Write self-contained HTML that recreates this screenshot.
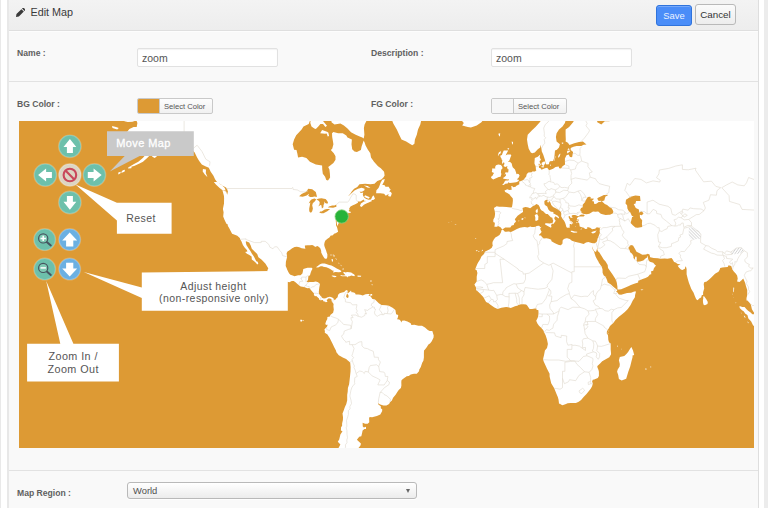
<!DOCTYPE html>
<html lang="en">
<head>
<meta charset="utf-8">
<title>Edit Map</title>
<style>
*{box-sizing:border-box;margin:0;padding:0}
html,body{width:768px;height:508px;overflow:hidden}
body{background:#fff;font-family:"Liberation Sans",sans-serif;color:#444;position:relative}
.lstrip{position:absolute;left:0;top:0;width:1.4px;height:508px;background:#e9e9e9}
.rstrip{position:absolute;left:764px;top:0;width:4px;height:508px;background:#ececec}
.panel{position:absolute;left:7px;top:-1px;width:752px;height:520px;background:#f9f9f9;border:1px solid #dedede;border-left:2px solid #e8e8e8}
.hdr{position:absolute;left:0;top:0;width:100%;height:31px;background:linear-gradient(#f3f3f3,#ededed);border-bottom:1px solid #dfdfdf;box-shadow:0 1px 0 #fdfdfd}
.hdr h3{position:absolute;left:21.5px;top:6px;font-size:10.8px;line-height:13px;font-weight:normal;color:#3a3a3a;letter-spacing:0}
.pencil{position:absolute;left:7px;top:8px;width:9px;height:9px}
.btn{position:absolute;top:5px;height:21px;border-radius:3px;font-size:9.8px;line-height:19px;text-align:center}
.save{left:647px;width:36px;background:#4a8df8;border:1px solid #2f73dc;color:#eaf2ff;font-size:9.4px;box-shadow:inset 0 1px 0 rgba(255,255,255,.25)}
.cancel{left:686px;width:41px;top:4px;background:linear-gradient(#fbfbfb,#ededed);border:1px solid #b9b9b9;color:#333}
.lbl{position:absolute;font-size:8.6px;font-weight:bold;color:#606060;letter-spacing:0;white-space:nowrap}
.inp{position:absolute;height:19px;width:141px;background:#fff;border:1px solid #e1e1e1;border-radius:2px;box-shadow:inset 0 1px 1px rgba(0,0,0,.05);font-size:10.5px;color:#555;line-height:18px;padding-left:4px}
.hr{position:absolute;left:0;width:100%;height:1px;background:#e2e2e2}
.cp{position:absolute;top:98px;width:76px;height:16px;border:1px solid #c9c9c9;border-radius:2px;background:linear-gradient(#fdfdfd,#f1f1f1);overflow:hidden}
.cp i{position:absolute;left:0;top:0;width:22px;height:100%;border-right:1px solid #c9c9c9}
.cp span{position:absolute;left:26px;top:0;font-size:7.6px;line-height:15px;color:#555;white-space:nowrap}
.sel{position:absolute;left:118px;top:481.6px;width:290px;height:17.4px;border:1px solid #b9b9b9;border-radius:3px;background:linear-gradient(#fff,#ececec);font-size:9.4px;line-height:15.4px;color:#505050;padding-left:5px;box-shadow:0 1px 0 rgba(255,255,255,.8)}
.sel b{position:absolute;right:6px;top:6px;width:0;height:0;border-left:2.5px solid transparent;border-right:2.5px solid transparent;border-top:4px solid #666}
#map{position:absolute;left:10px;top:121px;width:735px;height:327px;background:#dd9a34;overflow:hidden}
#map svg{position:absolute;left:0;top:0}
.tip{font-family:"Liberation Sans",sans-serif;font-size:10.5px;fill:#555;text-anchor:middle;letter-spacing:.42px}
</style>
</head>
<body>
<div class="lstrip"></div><div class="rstrip"></div>
<div class="panel">
  <div class="hdr">
    <svg class="pencil" viewBox="0 0 10 10"><path d="M0 10 L0.5 6.8 L6 1.3 L8.7 4 L3.2 9.5 Z M6.7 0.6 L7.4 -0.1 Q8.1 -0.5 8.8 0.1 L9.9 1.2 Q10.5 1.9 10.1 2.6 L9.4 3.3 Z" fill="#3a3a3a"/></svg>
    <h3>Edit Map</h3>
    <div class="btn save">Save</div>
    <div class="btn cancel">Cancel</div>
  </div>
  <div class="lbl" style="left:8px;top:48px">Name :</div>
  <div class="inp" style="left:128px;top:47.5px">zoom</div>
  <div class="lbl" style="left:362px;top:48px">Description :</div>
  <div class="inp" style="left:482px;top:47.5px">zoom</div>
  <div class="hr" style="top:81px"></div>
  <div class="lbl" style="left:8px;top:98.7px">BG Color :</div>
  <div class="cp" style="left:128px"><i style="background:#dd9a34"></i><span>Select Color</span></div>
  <div class="lbl" style="left:362px;top:98.7px">FG Color :</div>
  <div class="cp" style="left:482px"><i style="background:#f7f7f7"></i><span>Select Color</span></div>
  <div id="map">
<svg width="735" height="327" viewBox="0 0 735 327">
<path fill="#fff" d="M101.7 -32.3L105.2 -21.3L111.1 -16.3L112.3 -11.0L116.3 -9.2L111.6 -8.1L105.7 -6.4L101.5 -5.3L105.5 0.2L108.8 1.1L113.4 0.8L117.4 -0.6L118.4 1.9L117.7 6.1L114.6 6.1L110.4 8.1L107.8 11.2L106.2 15.6L108.0 20.4L111.1 23.7L115.1 22.8L115.8 26.9L116.3 29.6L119.8 28.2L123.3 28.7L127.1 28.7L126.4 34.0L123.8 37.0L119.3 40.7L114.6 43.2L109.2 46.4L115.1 45.0L120.0 42.8L124.0 40.7L128.7 36.5L132.2 33.1L134.6 30.0L136.2 26.0L138.6 20.9L141.6 17.6L144.5 17.1L142.1 19.9L139.8 25.1L139.5 26.9L144.0 25.5L147.5 23.2L148.7 19.5L152.2 18.5L154.6 21.4L158.1 23.2L164.0 23.2L168.2 25.1L172.2 27.8L175.7 31.4L176.9 34.0L178.1 36.5L180.2 39.9L182.8 43.6L186.3 45.2L189.8 46.8L191.7 50.8L194.3 54.6L196.2 58.4L197.6 60.6L202.3 63.9L207.0 66.4L207.9 67.5L208.9 70.6L208.2 73.7L207.2 70.6L203.5 69.6L204.9 74.7L205.1 77.1L205.0 82.4L203.9 88.1L204.6 91.3L204.2 95.6L205.6 98.9L207.4 102.7L208.6 103.3L208.9 105.1L210.0 106.8L211.4 109.4L213.1 112.7L216.4 113.9L218.3 114.8L220.8 117.0L221.3 118.4L222.5 120.5L223.9 124.1L225.8 126.7L227.9 129.1L228.4 130.4L226.1 131.0L227.9 132.8L230.0 133.8L232.6 135.6L232.8 138.5L235.2 140.2L237.1 142.0L238.1 143.6L239.3 142.8L238.7 140.8L237.3 140.2L236.4 138.5L234.9 135.6L232.8 132.5L231.4 129.9L229.8 127.8L227.4 124.1L226.7 120.8L227.2 120.3L230.2 121.6L231.7 124.6L232.8 127.8L235.6 130.6L238.2 133.0L239.4 136.2L242.7 138.7L246.5 142.8L248.3 145.8L249.3 147.3L248.3 149.6L249.8 152.0L251.4 153.2L253.3 154.9L256.3 155.8L259.1 157.4L261.7 158.6L265.0 159.8L268.5 160.7L270.4 161.2L272.8 160.1L274.7 160.0L276.5 161.2L279.6 163.9L281.7 165.5L285.0 166.0L288.5 167.2L290.4 167.0L290.9 167.8L293.2 170.5L294.9 172.2L294.9 174.1L296.0 175.2L297.2 174.9L298.6 176.2L300.0 177.6L300.0 178.5L301.7 179.2L303.8 179.0L304.7 180.4L306.1 180.4L306.6 181.3L307.8 181.0L308.5 180.4L307.6 179.0L309.0 178.1L309.7 177.2L311.8 177.8L312.7 178.8L312.5 179.9L313.4 181.3L314.8 180.4L314.8 177.8L313.2 176.4L310.9 175.8L308.7 176.3L306.6 177.2L305.0 177.6L303.3 176.9L302.4 175.7L301.4 174.8L300.0 172.7L299.8 171.0L300.0 168.9L300.3 166.5L301.0 163.0L299.1 161.2L296.8 160.6L294.4 161.0L290.9 161.0L289.2 161.2L287.6 160.7L289.0 159.0L289.2 156.9L289.5 154.7L290.9 154.4L291.6 152.0L292.3 150.0L293.5 147.8L292.8 146.8L288.5 146.8L284.3 148.0L283.8 150.7L283.4 152.5L281.5 154.2L279.1 154.2L275.6 155.2L273.7 154.4L271.4 153.7L270.2 152.5L268.5 149.5L267.6 147.0L266.7 145.0L266.9 140.8L268.1 135.9L267.6 132.3L268.5 130.4L270.9 128.9L273.2 127.3L275.6 125.9L277.9 125.8L280.3 126.3L282.6 127.3L284.5 127.5L286.4 127.8L285.9 125.7L285.9 124.6L288.5 124.2L290.9 124.3L293.2 124.1L295.3 124.9L296.0 125.9L298.4 125.0L300.0 125.9L301.4 127.5L302.2 129.9L302.2 131.5L303.3 133.8L304.3 135.4L305.7 137.4L306.4 137.8L307.6 137.7L308.3 136.2L308.4 133.6L307.6 131.2L307.1 129.4L306.1 127.0L305.4 125.1L305.2 123.3L305.7 121.1L306.4 119.5L308.5 117.8L310.4 116.4L311.8 114.5L313.4 114.5L315.5 112.5L316.7 112.2L319.1 110.7L318.4 107.7L317.9 106.0L317.0 104.2L317.0 101.9L316.7 99.2L317.7 98.6L317.7 101.3L318.1 104.2L318.0 105.2L318.8 103.9L320.0 101.6L320.0 100.4L319.1 98.6L320.5 99.2L320.5 99.9L322.4 97.4L322.6 95.6L322.6 95.0L326.1 94.3L327.5 93.6L326.1 93.4L323.5 93.9L326.6 92.8L328.5 92.5L328.9 91.6L329.6 92.2L330.4 91.9L332.0 91.7L332.0 90.5L331.5 90.5L331.8 91.3L330.8 91.3L330.4 90.0L329.6 89.5L330.6 88.6L330.1 87.8L331.5 85.6L333.9 84.3L336.2 83.3L339.0 81.7L338.8 80.6L341.4 80.4L343.8 79.1L344.7 78.4L345.2 79.7L347.3 80.1L344.9 80.4L341.9 82.4L340.9 84.9L342.6 85.9L344.9 83.7L347.3 82.4L350.8 81.1L353.1 80.1L352.2 79.1L354.3 79.1L356.0 77.7L354.8 74.7L354.1 74.4L353.1 76.1L352.0 78.4L349.6 78.7L347.3 78.1L345.6 77.1L344.2 75.1L343.8 73.7L344.2 71.6L341.9 72.0L340.5 70.8L343.0 70.8L345.4 69.2L345.6 67.8L342.6 66.7L339.0 67.8L335.5 69.6L332.5 72.3L330.1 74.4L329.2 75.1L331.3 72.7L332.7 70.6L335.1 67.8L338.3 66.0L340.5 63.2L346.1 62.8L351.3 63.2L355.5 62.8L358.3 59.9L362.3 58.6L364.4 56.5L365.6 54.6L365.1 50.8L361.8 47.2L359.0 45.2L357.9 44.0L355.0 40.7L352.0 36.5L351.3 32.2L348.9 28.7L346.6 24.6L345.6 21.4L344.7 19.5L344.0 21.4L342.6 25.5L341.9 29.1L337.9 30.9L335.5 30.5L333.2 28.2L332.5 23.2L332.9 18.5L328.5 16.6L327.3 14.6L323.8 12.2L319.1 12.2L314.4 10.9L313.0 12.2L313.2 16.1L313.9 19.9L314.4 23.2L313.2 27.8L311.8 29.1L314.8 32.2L316.5 35.3L316.5 38.7L314.4 42.0L310.9 44.8L309.2 46.0L310.4 48.4L310.9 52.7L311.1 56.5L309.7 58.4L309.0 59.5L307.3 59.1L306.1 55.8L303.8 52.7L303.3 48.8L303.1 44.4L296.8 43.6L290.9 40.7L287.4 37.0L283.1 35.7L279.1 36.5L278.4 32.7L277.5 28.9L275.1 28.7L273.7 23.2L275.1 18.5L277.2 14.2L279.1 12.2L282.6 8.6L284.5 5.6L289.7 2.9L292.0 -3.0L294.4 -7.5L294.4 -32.3ZM314.4 133.3L315.5 134.3L315.3 135.9L314.6 135.6ZM321.7 143.8L322.8 145.0L322.4 145.3L321.4 144.0ZM312.5 137.9L313.7 137.9L314.1 140.2L313.0 140.8ZM344.9 64.4L348.7 65.0L351.5 67.1L348.4 66.6ZM312.0 -13.3L312.5 1.3L315.5 3.5L318.4 2.9L321.4 2.4L324.9 4.5L328.5 7.6L332.0 11.2L336.7 13.7L340.7 15.6L343.3 16.6L344.7 17.6L345.4 13.7L344.9 7.1L345.6 3.5L347.3 0.2L348.4 -4.7L348.4 -13.3ZM301.2 12.2L303.1 8.9L308.0 10.7L309.7 11.7L306.1 12.7ZM296.9 146.3L298.4 145.3L301.0 143.2L303.0 142.5L305.7 142.5L307.3 142.9L310.1 144.0L312.5 144.4L315.3 145.9L317.7 147.5L320.4 148.8L322.4 150.0L321.9 150.9L319.8 151.2L316.7 151.1L313.9 151.4L314.8 149.8L313.2 149.5L312.0 148.6L309.7 147.3L307.4 146.3L305.7 146.0L304.3 145.8L303.3 145.2L301.7 145.3L300.5 145.8L299.1 146.5ZM316.3 136.9L317.7 137.9L317.4 139.0L316.7 137.7ZM281.2 198.8L282.9 198.8L283.1 200.4L281.5 200.4ZM283.6 199.1L284.5 199.1L284.5 199.9L283.6 199.9ZM310.9 133.8L313.4 133.7L313.4 134.3L310.9 134.3ZM370.8 -32.3L371.9 -13.3L370.3 -7.5L374.3 2.4L377.8 8.6L380.2 13.7L382.5 18.5L387.2 20.4L390.8 22.8L393.3 24.2L395.4 22.8L395.9 18.5L397.8 13.7L399.0 8.6L401.3 3.5L402.5 -1.9L407.2 -5.3L411.9 -6.9L418.9 -13.3L426.0 -32.3ZM351.3 159.5L352.7 159.5L352.4 160.7L351.3 160.5ZM183.9 48.0L187.0 48.6L186.8 51.9L188.5 56.3L185.8 53.5L183.7 50.4ZM321.5 154.8L321.7 154.1L324.0 154.4L326.5 154.3L325.4 153.0L324.0 151.5L325.4 150.9L326.8 151.4L328.0 151.1L330.4 151.2L332.2 151.6L333.6 152.5L334.9 153.3L335.9 154.2L335.3 155.2L332.2 154.6L330.8 155.2L329.4 155.2L328.7 156.6L327.9 155.5L326.1 155.2L323.2 155.2ZM438.9 -4.7L444.8 1.9L443.2 4.5L448.8 6.1L451.9 6.6L457.7 4.5L462.4 1.3L464.8 -1.9L462.4 -8.7L458.9 -10.4L454.2 -8.7L448.3 -8.1L443.6 -10.4ZM323.3 147.8L324.9 147.5L324.7 148.4L323.5 148.4ZM312.4 154.9L313.4 154.4L315.8 154.7L317.4 155.3L317.2 155.9L315.1 156.3L313.1 155.2ZM133.4 34.0L138.1 30.0L139.3 34.0L135.8 37.0L133.2 35.7ZM319.5 141.5L320.5 143.0L320.0 143.0L319.3 141.8ZM307.6 12.2L309.4 11.7L310.1 15.1L308.7 15.6ZM352.6 163.1L353.6 163.4L353.5 164.3L352.9 164.2ZM357.1 72.3L357.4 69.2L359.5 67.1L360.4 65.0L361.8 61.3L363.3 58.8L365.8 58.0L365.1 60.6L363.3 63.9L365.4 64.1L366.5 65.7L369.6 65.7L370.8 67.8L371.7 68.5L370.3 70.6L371.9 71.0L372.8 72.5L371.8 75.6L370.5 75.6L369.1 74.9L369.6 73.0L366.8 74.7L365.1 72.7L361.4 72.3ZM103.1 22.3L107.1 21.8L107.1 24.2L103.3 24.2ZM345.2 75.6L346.1 74.2L350.8 76.2L349.6 77.7L346.6 76.6ZM338.5 154.6L342.2 154.7L342.0 155.7L338.6 155.8ZM291.3 1.9L292.5 5.6L295.3 7.6L296.8 8.1L299.3 5.6L301.4 2.9L304.0 2.9L306.4 6.1L308.0 4.8L306.1 2.4L303.8 -0.3L299.1 -4.7L295.6 -6.9L292.0 -3.6ZM93.0 5.0L97.0 6.1L99.8 7.1L98.2 8.6L93.5 7.1ZM351.0 174.7L353.3 174.5L353.1 172.9L351.5 173.1ZM99.3 51.6L101.7 50.8L101.5 52.3L99.3 53.5ZM103.8 49.2L105.9 48.8L105.7 50.4L103.6 51.6L101.9 51.6ZM109.0 46.4L112.7 45.6L112.3 47.2L109.2 47.4ZM194.8 61.0L198.1 61.0L202.0 63.5L205.6 66.7L206.7 69.6L203.9 69.4L200.6 67.1L196.9 63.5ZM313.4 181.3L314.6 183.0L314.4 185.3L314.8 188.8L314.1 191.8L311.3 193.9L310.9 195.5L308.4 196.1L308.3 197.9L307.1 200.3L306.4 202.5L306.3 203.2L307.8 204.1L308.7 203.4L308.0 205.7L307.4 206.2L305.4 208.6L305.9 209.9L305.8 211.8L308.5 213.6L309.2 214.8L310.7 216.9L311.8 219.2L313.7 223.0L315.2 226.2L317.2 229.9L317.2 231.1L319.8 234.2L323.8 236.6L327.1 238.0L328.8 239.6L331.2 241.6L331.6 245.9L331.5 250.3L331.1 254.5L330.6 258.9L330.1 263.2L328.9 267.0L328.7 270.8L328.2 273.7L328.2 279.3L327.3 283.0L325.9 286.1L324.6 289.7L323.5 292.5L324.0 296.3L323.9 298.9L323.1 302.4L323.1 304.9L322.1 306.1L321.9 309.6L323.5 310.2L321.4 313.4L320.2 318.4L318.8 320.7L321.4 323.4L319.5 326.9L319.1 332.2L320.2 339.6L323.1 347.3L336.7 347.3L335.8 341.1L334.4 338.1L334.4 333.3L337.4 329.7L341.6 324.3L341.9 322.4L337.9 318.7L340.2 315.7L342.3 315.2L343.0 312.5L343.6 309.6L345.4 308.0L347.0 308.0L347.0 305.8L344.9 306.4L343.8 305.5L343.6 301.8L346.1 302.7L348.7 302.7L350.3 301.2L350.1 297.2L350.6 295.9L353.1 296.2L357.9 295.1L361.3 293.5L363.1 290.2L363.3 288.6L361.8 287.3L361.8 285.3L359.3 283.6L359.3 281.9L360.6 283.2L364.4 284.4L367.4 284.6L370.1 283.0L371.0 281.2L372.9 279.4L374.1 276.8L376.6 273.7L378.5 270.7L379.7 269.1L381.9 267.0L382.4 264.6L382.3 261.0L382.5 259.2L383.9 257.9L387.7 255.2L389.8 254.9L391.7 253.6L395.0 252.7L397.8 252.7L400.0 250.3L400.3 248.6L401.8 246.1L403.2 241.7L404.4 239.7L404.9 236.6L404.9 232.7L405.0 229.4L406.0 228.4L407.9 226.1L409.4 223.5L411.0 222.5L412.6 220.5L414.5 216.8L414.7 214.6L413.8 211.5L413.3 210.0L410.7 209.9L408.8 209.0L406.0 206.6L403.0 204.8L399.4 204.8L395.4 203.7L392.4 203.9L391.7 202.2L388.4 200.6L385.3 199.5L383.0 199.8L382.5 201.4L381.4 199.5L380.2 198.5L378.1 198.2L379.0 196.0L379.2 194.1L377.1 193.2L376.4 189.0L375.2 187.9L373.6 186.7L369.8 184.7L366.9 184.2L362.5 184.1L359.8 182.3L356.0 178.6L353.4 178.1L351.7 175.5L349.4 174.3L351.0 173.1L348.9 173.1L346.6 173.2L345.4 173.8L343.8 174.5L341.4 173.8L339.3 173.4L336.7 173.6L336.0 171.9L333.9 171.2L332.5 171.2L332.0 169.6L331.3 170.3L329.6 171.7L328.2 172.5L328.8 170.4L328.1 169.0L326.6 169.6L325.2 171.1L322.1 171.7L320.6 172.3L319.1 173.8L318.6 176.2L317.2 177.4L315.9 179.2L314.7 177.9ZM505.9 -32.3L524.7 -7.5L521.2 0.8L516.5 6.1L513.0 9.2L508.7 13.7L508.0 18.5L508.7 23.2L509.7 27.8L511.8 31.4L513.2 32.2L515.8 31.4L518.8 28.2L521.2 26.4L521.4 23.7L522.4 27.3L522.8 30.5L524.2 33.5L525.9 38.7L526.3 40.7L526.8 42.8L527.5 43.4L529.9 43.2L530.3 41.2L531.0 40.3L534.1 39.9L535.3 36.5L535.7 32.7L536.0 29.6L537.9 28.7L540.0 26.4L540.9 23.2L537.6 20.4L536.9 16.1L537.6 12.2L540.0 8.6L543.5 5.6L545.9 1.9L547.0 -1.9L548.7 -5.8L552.9 -6.4L556.0 -2.5L554.1 1.3L550.1 6.1L546.6 8.6L546.6 13.7L546.8 18.5L546.6 20.4L548.9 21.8L550.5 23.9L555.2 22.3L560.0 20.9L563.9 20.4L567.5 23.5L564.6 23.7L562.3 25.1L557.6 25.1L554.5 25.8L551.7 26.9L551.7 29.1L554.1 30.9L553.6 33.5L553.1 36.3L551.0 36.1L549.6 33.5L547.5 34.2L545.9 37.4L545.9 40.7L546.1 43.6L543.5 45.2L542.1 47.4L540.2 47.2L539.7 45.6L536.5 46.0L534.1 47.8L530.1 49.2L528.2 46.8L525.9 47.2L522.4 48.8L521.9 47.6L520.0 46.8L519.8 44.8L521.2 42.8L520.5 39.9L522.1 39.1L520.7 36.5L521.2 33.5L518.8 35.7L515.8 37.0L515.5 40.7L515.5 42.8L516.7 45.2L516.9 48.4L517.4 49.2L516.0 50.4L513.2 50.4L512.7 51.2L509.4 51.6L507.8 53.1L507.1 55.8L506.1 56.7L504.7 58.8L502.4 59.9L500.3 60.6L500.3 63.2L497.0 65.0L496.7 65.7L493.9 66.2L493.4 65.0L492.3 65.1L492.7 68.7L490.2 69.0L488.3 68.2L485.5 69.4L486.2 71.1L488.3 72.0L490.6 73.4L491.6 75.1L493.7 77.2L493.9 79.4L493.6 82.4L493.0 85.9L492.3 86.4L489.4 86.2L487.6 86.1L483.6 85.7L480.1 85.7L477.7 85.3L474.9 87.0L475.8 90.3L476.1 93.1L475.6 96.2L474.4 98.6L474.2 100.5L474.9 101.6L475.8 101.6L475.8 103.0L475.4 105.7L477.9 105.7L479.1 105.1L481.5 106.2L483.3 108.5L484.0 108.1L486.2 106.5L489.4 106.4L491.3 106.4L492.7 104.5L494.9 103.9L494.9 102.7L497.0 100.5L495.8 98.3L498.6 94.7L501.7 92.5L504.0 91.0L504.0 89.4L503.5 86.9L504.7 86.5L506.4 85.9L508.2 86.2L509.2 86.5L511.1 87.2L512.2 86.5L513.7 85.3L515.8 84.3L517.4 83.0L519.5 84.0L520.7 85.9L521.2 87.7L522.6 89.4L524.2 90.3L525.4 91.6L527.0 93.0L528.7 93.1L529.9 94.3L530.6 95.0L531.8 96.2L533.4 96.8L533.6 98.3L534.3 99.8L533.4 102.2L533.3 102.9L534.3 102.9L535.5 101.6L536.7 99.8L535.3 97.7L535.5 96.5L536.5 95.3L538.8 96.8L539.7 97.4L540.0 96.2L538.8 94.8L536.5 93.4L534.1 92.2L534.6 91.0L532.2 90.8L531.0 90.3L529.4 88.4L528.2 85.6L525.9 84.0L525.4 82.4L525.4 80.1L527.3 78.7L528.9 78.9L528.2 80.7L529.2 81.7L530.3 80.1L531.5 81.7L532.2 84.0L534.1 85.9L537.6 87.8L539.0 88.6L540.4 89.4L541.9 91.0L542.3 92.8L542.1 95.3L543.5 97.7L545.1 99.8L546.1 101.7L546.6 103.3L547.3 105.7L547.5 106.2L549.1 107.1L550.1 106.2L551.0 107.3L550.5 104.8L551.0 104.2L550.5 103.0L552.0 102.9L553.0 103.8L552.9 102.2L551.3 100.7L550.3 98.9L551.3 99.5L549.8 96.8L549.6 95.3L550.4 95.0L551.5 96.2L551.5 96.9L552.7 96.8L553.8 96.5L552.4 95.0L553.8 94.0L555.5 93.9L557.4 94.2L557.8 95.0L559.5 95.0L558.1 96.6L559.2 95.6L561.1 93.9L562.8 93.6L564.6 93.7L564.9 93.0L562.5 91.9L562.3 90.6L561.1 89.1L562.1 86.9L563.7 86.2L563.7 83.7L566.1 81.1L566.3 80.1L567.5 78.1L568.8 76.1L570.5 75.7L571.7 76.1L571.5 77.4L572.9 77.4L575.2 77.7L575.5 77.2L572.9 79.9L575.0 80.6L575.0 82.5L575.9 83.0L577.3 82.7L579.7 81.1L582.3 80.7L582.3 79.7L579.7 80.1L578.8 78.7L578.3 77.2L579.5 76.4L582.3 75.2L584.9 74.0L587.0 73.9L588.9 73.7L588.6 74.4L586.5 75.4L585.8 77.4L585.3 79.4L583.5 80.1L583.0 80.6L584.2 81.4L585.8 83.0L588.1 84.0L589.8 85.6L592.9 87.5L594.3 90.3L594.0 92.2L591.0 93.7L589.8 93.7L586.7 93.9L583.5 93.3L581.8 92.8L579.2 90.6L576.4 90.8L574.0 90.6L572.4 91.4L570.3 92.8L567.7 93.3L565.1 93.1L564.8 93.7L565.8 94.5L564.6 95.4L562.3 95.6L560.7 95.6L559.2 95.9L558.1 96.9L557.8 98.3L559.7 98.6L559.5 100.1L558.3 101.9L560.0 101.6L560.4 103.6L560.7 105.4L562.8 106.2L564.9 106.7L566.1 108.0L568.2 107.7L568.4 106.1L571.2 106.8L573.1 108.3L576.2 107.7L577.8 106.2L580.2 106.8L581.6 106.5L580.6 107.7L580.9 108.8L580.6 110.0L580.9 111.7L579.9 114.5L579.0 116.7L578.6 117.5L578.2 119.6L577.6 121.1L576.9 121.6L575.9 122.2L574.0 122.2L572.6 122.0L573.0 125.3L573.3 126.2L574.5 128.9L575.5 130.2L577.0 131.1L577.5 129.6L578.0 127.8L578.6 126.3L578.3 128.6L579.0 130.2L580.4 131.5L582.9 135.6L584.5 138.2L586.6 140.5L588.7 144.0L589.0 147.0L591.1 150.0L593.4 153.2L595.8 156.9L597.1 159.3L597.8 161.7L598.4 165.5L598.5 168.4L600.1 168.6L602.2 168.2L605.8 166.7L609.3 165.3L611.9 164.1L615.2 162.7L619.2 161.5L619.2 159.8L621.3 158.9L623.6 158.1L626.5 157.1L629.0 155.8L630.9 153.5L632.3 153.2L632.1 150.3L634.2 149.8L634.9 147.3L637.0 144.5L635.9 143.8L634.2 141.8L630.9 140.8L629.5 139.2L628.9 136.7L628.9 134.9L628.3 135.5L628.1 136.4L626.5 137.4L624.3 139.5L621.0 140.4L618.2 140.8L617.5 139.5L617.8 138.2L617.6 135.9L616.9 135.3L615.9 136.7L616.0 138.8L614.5 136.9L614.4 134.9L613.1 132.8L611.2 131.2L610.5 129.1L609.3 126.9L609.8 126.2L610.6 125.3L611.9 124.1L614.0 124.6L615.9 127.8L617.5 130.7L620.1 132.0L623.4 133.8L626.9 133.6L628.8 132.7L630.5 133.6L631.2 136.2L634.7 136.9L638.9 137.3L641.3 137.7L645.7 137.6L648.5 137.7L652.5 136.9L653.7 138.6L655.1 141.0L656.8 141.5L658.2 142.8L661.5 143.5L658.6 144.8L660.1 146.8L661.9 148.5L663.4 148.9L665.9 147.8L666.2 146.3L666.9 145.3L667.3 147.0L667.6 148.0L667.6 153.2L668.8 158.1L669.9 161.7L672.3 167.9L674.6 171.8L675.8 174.9L677.2 178.3L678.7 179.3L680.2 177.6L682.1 176.5L682.9 174.1L684.1 174.1L684.1 171.2L685.2 167.4L684.7 162.9L685.4 161.0L687.3 160.7L689.9 158.8L692.3 156.4L696.0 152.7L699.5 150.7L700.7 148.8L701.2 147.0L703.3 146.5L705.6 146.3L708.7 146.0L709.6 144.3L712.2 145.0L713.4 148.5L714.8 150.5L716.7 152.5L718.1 154.4L718.7 157.4L718.1 160.5L720.5 161.1L722.6 159.3L724.2 157.6L724.9 159.0L726.1 161.7L727.0 165.3L728.2 169.1L728.2 172.4L728.1 174.8L727.5 177.1L727.5 179.5L728.4 179.5L730.1 181.3L731.7 183.2L732.3 185.5L732.9 188.3L734.6 191.1L735.7 192.3L737.4 193.9L739.7 195.0L741.4 194.8L759.7 194.8L759.7 -32.3L599.9 -32.3L599.9 -10.4L595.2 -9.8L590.5 -8.1L592.9 -4.7L590.5 0.2L585.8 0.2L582.3 3.5L578.3 1.3L577.6 -4.7L572.9 -10.4L576.4 -11.6L585.8 -8.1L592.9 -11.6L592.9 -32.3ZM572.6 121.9L569.4 121.0L567.0 121.4L564.6 122.9L561.1 121.9L555.7 120.8L552.9 119.7L550.8 118.1L548.2 117.3L547.3 117.3L544.9 118.1L543.6 119.5L543.5 122.4L541.9 124.3L540.0 124.1L537.6 123.0L535.5 121.9L532.5 120.3L532.2 118.8L529.9 117.8L527.5 117.3L524.7 117.5L523.5 116.6L522.4 115.3L522.1 114.5L520.2 114.5L520.2 113.4L521.9 112.0L522.6 110.8L521.6 109.1L521.2 107.4L522.5 105.8L520.9 106.2L520.7 105.1L519.6 104.8L517.6 105.1L516.7 105.8L514.8 106.0L512.7 106.0L511.3 105.5L508.5 106.4L505.7 106.0L503.7 106.2L501.0 106.8L497.9 108.0L495.1 109.4L492.0 111.1L489.6 110.5L487.3 110.8L485.9 110.8L484.0 108.8L482.6 109.1L481.9 111.4L480.5 114.1L478.6 115.3L476.3 116.4L474.8 118.4L473.5 121.1L473.4 123.5L473.9 124.1L472.8 126.7L470.4 128.6L466.2 130.6L465.0 133.0L462.4 135.4L461.2 138.2L459.1 141.5L458.2 143.3L456.6 147.3L456.4 148.8L457.7 149.3L458.4 152.0L457.7 155.7L457.7 160.5L455.4 163.5L457.0 166.5L457.1 169.1L458.9 170.5L461.2 172.7L464.3 175.9L465.5 178.3L467.1 180.9L469.7 182.3L471.1 183.4L475.4 186.5L478.6 188.0L482.4 186.7L487.1 185.9L489.4 186.2L491.8 187.0L496.0 185.2L498.9 184.4L499.3 183.9L502.1 183.3L504.5 183.2L507.1 183.4L508.2 184.6L509.2 186.0L510.6 188.1L513.0 187.9L516.0 187.6L517.4 187.6L517.6 189.0L519.3 189.0L519.5 191.1L519.5 192.7L519.1 195.5L518.6 197.1L517.2 199.7L518.4 202.5L520.0 204.8L522.4 207.1L524.3 209.2L525.2 211.5L525.6 212.2L526.6 214.3L528.0 218.5L528.9 223.0L528.0 226.9L525.9 229.6L525.1 233.7L524.2 237.6L524.1 238.6L524.7 240.5L527.0 245.4L528.0 247.8L530.6 252.7L530.6 255.4L531.8 260.5L532.2 262.2L535.2 267.3L537.2 272.3L538.8 276.1L539.5 278.6L539.9 281.6L540.0 282.9L540.8 282.5L541.9 283.6L543.5 284.2L547.0 283.0L548.6 282.3L551.7 282.1L555.2 282.1L556.9 281.9L559.7 280.8L562.1 279.1L564.6 276.1L567.5 272.9L569.5 270.6L571.7 267.8L573.1 265.2L573.8 262.6L573.1 260.4L573.8 258.7L575.2 258.4L578.8 256.9L579.9 255.1L579.9 250.8L579.5 249.1L578.3 246.1L578.4 245.0L581.1 242.4L583.2 240.2L586.3 238.5L590.3 236.3L592.1 233.2L591.9 230.8L591.7 228.4L591.7 224.9L591.6 222.5L590.0 221.3L589.3 218.8L589.1 215.5L588.9 213.9L587.8 212.5L587.9 210.6L588.6 209.0L589.7 207.5L591.0 205.0L592.6 203.4L594.3 202.0L596.5 198.9L599.9 195.7L603.1 193.3L605.8 191.1L608.8 187.9L611.6 184.1L613.5 179.9L615.9 176.2L616.1 174.1L616.6 171.9L617.1 170.4L615.2 170.5L612.1 171.7L608.1 172.1L604.6 173.0L602.2 173.7L599.9 173.6L598.3 171.5L597.9 171.0L596.8 171.0L598.3 169.8L597.8 168.4L596.1 167.2L594.0 165.5L591.9 163.6L589.6 161.9L588.7 161.5L588.1 159.3L586.7 155.9L584.6 154.2L583.6 151.7L583.5 148.3L582.7 145.8L579.9 141.8L579.5 140.8L578.0 138.2L576.6 135.4L575.6 132.4L575.2 130.7L573.8 128.6L573.1 126.5L573.0 125.3L573.1 122.2ZM612.4 226.1L614.0 229.4L615.2 233.9L613.5 234.4L613.6 236.1L612.6 239.7L611.2 245.4L609.3 250.8L607.2 257.7L602.7 259.5L599.9 257.9L599.2 253.9L598.1 250.8L598.7 248.6L600.6 245.4L600.8 242.9L599.9 239.3L600.8 236.1L603.0 235.5L605.3 234.9L607.4 233.0L609.1 231.1L610.0 229.6L611.4 227.3ZM542.6 21.8L544.2 21.4L544.2 22.8L543.0 22.8ZM714.3 166.4L715.2 166.7L715.0 169.6L714.5 171.2L714.0 171.0L714.3 168.9ZM435.8 103.0L437.4 103.2L437.3 103.6L435.9 103.5ZM432.2 100.4L432.9 100.5L432.8 100.8L432.3 100.8ZM429.5 101.1L430.6 101.4L430.5 101.6L429.5 101.6ZM531.0 43.6L532.1 44.0L532.0 44.8L531.0 44.4ZM456.8 129.4L458.7 129.0L458.0 130.3L457.0 130.0ZM459.4 130.0L460.3 130.2L460.3 131.1L459.5 131.0ZM462.4 130.2L463.8 128.6L464.0 129.6L462.9 130.3ZM557.4 101.1L558.0 101.1L557.8 102.2L557.4 102.0ZM598.1 224.6L598.7 224.8L598.7 225.8L598.1 225.7ZM516.7 89.4L518.5 87.5L518.9 90.3L518.1 92.5L516.7 91.0ZM551.8 109.8L553.1 109.8L555.6 110.4L558.3 110.7L558.1 111.4L554.8 111.7L551.8 110.7ZM572.4 111.3L574.0 110.4L577.8 109.4L576.3 111.1L576.5 111.4L574.0 112.5L572.6 112.1ZM550.5 99.8L551.5 99.8L553.4 101.0L554.3 102.7L553.4 102.4L552.0 101.0ZM479.3 12.7L481.2 12.2L480.8 15.6L480.1 15.1ZM519.5 42.8L521.4 42.4L521.9 43.6L521.2 44.6L519.8 44.2ZM483.1 63.7L484.6 64.1L486.9 62.6L488.3 62.8L489.4 61.3L490.7 61.9L493.4 61.7L497.1 61.2L498.9 60.6L499.8 59.7L499.8 58.8L497.9 58.6L498.7 57.5L499.6 56.7L500.6 54.6L499.6 52.9L497.7 52.8L497.0 53.5L497.3 52.3L496.7 50.4L496.0 48.4L493.7 46.2L493.2 44.8L492.7 42.4L491.8 41.6L490.6 40.7L488.7 40.7L490.4 39.5L491.6 35.9L492.3 34.4L491.8 33.5L488.3 33.5L486.6 34.4L487.3 32.9L489.2 29.6L484.8 29.5L484.0 31.1L482.9 34.0L481.2 34.8L481.7 36.5L482.9 37.4L481.9 37.8L483.3 39.1L483.1 41.2L482.9 43.6L483.8 42.0L485.0 41.2L485.5 42.8L484.5 45.0L486.2 46.0L488.0 45.2L488.5 45.2L488.0 46.8L489.0 48.4L489.9 48.4L489.3 49.8L489.3 51.2L488.5 51.4L486.4 51.2L486.4 52.3L485.3 53.5L486.9 53.1L487.0 54.6L485.5 56.1L484.0 56.9L484.5 57.8L486.4 58.0L489.0 58.6L490.2 58.0L489.4 59.5L486.6 59.5L485.8 60.2L484.6 62.4ZM539.0 36.1L539.7 34.0L541.1 32.4L541.4 32.9L540.7 35.3L539.5 36.8ZM548.4 28.2L549.8 27.3L550.7 28.5L549.6 29.1ZM499.3 99.8L500.3 99.5L500.1 100.2L499.4 100.2ZM481.9 51.4L482.4 52.9L481.6 55.8L479.8 56.0L477.0 57.3L474.2 58.4L472.5 57.3L471.9 56.1L473.7 54.4L474.3 52.9L475.1 51.9L472.8 51.0L473.2 49.0L473.1 47.6L476.3 47.6L476.1 46.0L477.0 44.2L479.3 43.4L481.9 44.0L483.1 45.6L483.6 47.2L482.2 48.8ZM713.6 172.7L714.1 172.8L714.0 173.6L713.6 173.5ZM557.4 99.0L559.0 98.7L558.8 99.8L557.6 99.5ZM479.8 31.4L481.9 30.0L481.7 32.2L479.8 33.5L479.1 35.3L478.9 34.0ZM522.4 45.2L525.2 45.2L524.5 46.4L522.6 46.2ZM456.0 117.4L457.3 117.5L457.1 117.9L456.1 117.9ZM502.0 98.0L503.8 96.9L504.6 97.7L503.7 98.9L502.6 98.6ZM631.3 245.6L632.1 245.4L632.3 246.2L631.4 246.6ZM602.4 227.7L602.8 227.7L602.8 228.4L602.4 228.4ZM505.4 96.6L506.6 96.8L506.5 97.2L505.5 97.1ZM556.2 105.1L556.7 105.2L556.4 105.8L556.1 105.7ZM724.7 194.8L725.6 194.7L726.6 196.4L725.9 196.7ZM714.3 176.5L714.7 176.7L714.6 176.9L714.3 176.9ZM716.6 181.3L717.3 181.5L717.0 182.3L716.7 182.2ZM535.0 39.5L536.3 35.3L536.7 35.0L535.7 38.7L535.2 39.9ZM488.5 27.3L490.2 27.3L489.9 28.5L488.7 28.2ZM589.7 209.4L590.1 209.5L590.0 210.7L589.7 210.6ZM626.3 247.6L627.3 247.6L627.7 248.3L626.9 248.8L626.3 248.3ZM561.6 108.1L562.9 107.3L562.5 108.3L561.9 108.8ZM548.0 30.9L548.4 29.8L551.0 29.4L551.3 30.2L549.6 31.4L548.4 32.4ZM515.7 93.9L518.1 93.0L519.4 95.3L519.2 98.9L517.8 99.5L517.3 100.1L516.2 99.5L516.4 96.8ZM492.7 20.4L494.1 20.9L493.7 23.7L493.0 22.8ZM728.2 200.4L729.1 201.1L729.9 202.2L729.1 202.0ZM525.8 103.3L526.5 102.3L527.9 102.3L530.6 102.6L533.2 102.0L532.0 104.4L532.5 105.5L532.0 106.7L530.1 105.7L528.2 104.8ZM721.6 191.6L722.3 191.8L723.3 192.5L722.8 192.6ZM621.8 168.5L623.4 168.4L624.6 168.7L622.9 169.3L621.8 169.0ZM684.1 175.4L685.1 175.2L687.3 178.2L688.8 180.9L688.5 183.0L685.9 184.3L684.6 183.7L684.1 181.9L683.9 179.5L684.3 177.2ZM720.5 185.1L723.3 186.0L725.6 185.9L727.5 188.3L729.1 189.7L731.3 191.3L733.4 193.2L735.5 193.4L737.4 195.7L739.5 196.7L740.4 198.1L739.7 200.4L742.1 202.2L745.6 205.0L745.6 212.0L742.1 211.5L736.9 207.3L733.9 203.9L732.2 200.4L729.4 197.4L728.4 194.1L726.1 192.5L724.9 190.6L723.0 189.2L720.7 186.9ZM588.6 211.4L589.1 211.8L589.4 213.0L588.9 212.8ZM522.6 42.0L524.2 40.7L526.1 40.5L526.1 42.4L525.2 44.0L524.7 45.0L522.8 44.0Z"/>
<path fill="#dd9a34" d="M328.2 172.7L329.4 174.1L329.6 176.2L328.2 176.9L327.1 175.7L327.5 173.8ZM607.0 78.7L611.6 75.7L616.4 74.4L621.0 75.1L621.5 80.1L617.1 80.1L616.4 82.7L614.7 83.0L616.8 86.9L619.9 88.4L620.1 91.6L622.5 90.3L624.6 92.2L622.9 94.3L620.8 93.7L621.0 96.8L623.2 99.2L622.9 102.7L623.2 105.1L623.2 106.0L618.7 106.8L616.4 106.4L614.0 104.5L611.6 101.9L612.4 98.9L613.1 95.9L614.7 95.6L612.8 94.7L611.2 91.3L610.0 90.6L608.4 87.5L608.1 84.3L606.5 82.4ZM300.3 91.6L302.2 92.3L304.5 92.2L308.3 90.2L311.1 88.0L309.7 88.0L308.0 88.1L305.7 88.6L302.6 90.5L301.2 90.5ZM297.5 78.4L299.1 77.7L300.3 77.4L302.6 77.2L305.0 77.7L306.6 78.1L308.3 80.1L309.0 81.7L308.3 82.7L306.1 82.0L305.4 80.2L305.2 82.7L304.5 84.0L304.4 86.2L302.9 87.5L302.6 85.6L302.4 84.3L301.4 84.1L299.3 85.4L300.5 83.3L300.7 80.9L299.3 79.6L298.2 78.9ZM290.6 91.1L292.0 91.7L293.2 90.3L293.9 87.5L293.2 84.3L293.9 82.0L295.3 81.1L296.0 79.9L297.3 78.4L295.6 77.4L293.7 78.1L292.0 78.7L290.6 80.7L289.7 82.5L291.3 81.4L290.9 84.0L290.2 87.5L290.2 89.4ZM309.0 86.5L309.9 85.4L313.2 84.5L315.5 84.6L317.0 83.7L317.4 84.5L317.4 85.7L314.1 86.7L310.9 86.5ZM280.1 75.2L282.6 73.0L286.6 71.0L288.3 69.2L289.2 67.8L293.2 68.3L296.8 71.0L297.7 74.4L297.9 76.1L295.6 75.4L293.2 76.1L291.1 75.9L289.2 74.7L290.2 72.8L287.6 74.4L286.2 74.9L283.6 75.7Z"/>
<path fill="none" stroke="#ddd5c8" stroke-width=".55" d="M639.5 125.5L643.4 126.7L647.3 126.7L652.4 125.4L652.5 122.7L655.6 121.6L659.4 119.9L659.8 116.7L661.7 116.0L660.8 114.1L663.6 113.2L664.9 107.3L669.7 106.0L672.5 104.9M640.3 109.7L642.9 110.5L645.0 109.0L648.1 107.7L648.8 105.4L652.8 104.6L655.8 105.1L658.4 104.8L659.8 103.9L661.5 104.1L662.2 102.4L664.2 101.9L664.8 106.5L667.3 105.1L668.8 104.4L672.5 104.9M165.1 -29.6L165.1 21.8L169.8 23.2L173.4 28.2L178.1 24.2L183.0 30.5L186.8 38.2L191.0 40.7L190.5 44.8M545.9 94.2L544.7 92.8L544.9 91.1L543.7 88.9L542.1 91.1M602.2 92.8L603.7 94.3L604.6 98.0L605.9 100.1M526.7 211.6L527.5 211.6L535.5 211.8L536.5 215.0L542.1 216.7L542.3 214.3L547.7 215.0L547.6 220.6L548.9 224.2L552.9 223.5M524.1 238.6L529.9 239.0L539.9 239.0L546.8 240.3L551.5 239.5M368.2 259.5L370.4 261.1L370.1 263.5L365.4 266.7L361.1 271.5M337.1 252.5L338.3 255.4L335.8 256.6L335.5 261.3L336.0 262.8L334.1 264.4L332.8 266.7L332.0 269.1L330.8 275.0L332.0 279.1L332.5 282.5L330.8 285.6L331.1 287.9L329.4 289.6L329.4 293.4L328.7 296.0L327.5 299.3L327.8 303.9L327.9 305.8L327.1 306.4L327.9 309.3L328.0 313.4L328.5 316.7L327.8 319.0L328.0 321.7L326.4 323.8L326.6 326.2L323.8 329.7L324.7 334.8M521.1 74.9L522.4 75.2L525.1 74.2L525.8 75.4L528.7 76.1L528.0 77.1L528.5 78.4L528.9 79.1M528.7 76.1L530.7 76.4L533.3 75.4L534.3 74.9L535.3 73.0L536.7 72.0L536.8 71.0L536.3 68.9L531.8 67.5L531.0 68.9L528.9 68.3M601.8 97.7L605.9 100.1L609.3 97.7L611.4 101.4M605.7 91.0L607.7 92.8L610.7 91.1M504.5 59.0L506.6 59.0L508.2 58.6L510.2 59.7L509.9 61.2L510.6 61.2L511.5 62.6L511.0 63.3L510.0 64.4L510.1 65.5M483.6 173.8L486.4 175.5L490.2 175.9L489.9 172.4L496.1 172.2L498.6 172.4L502.1 170.3L502.1 169.3L498.7 166.8L497.1 163.0M549.8 83.7L549.1 86.9L550.5 86.9L549.1 89.7L550.5 92.7L554.1 92.3L557.7 92.7L558.4 91.6L562.3 90.6M503.0 183.3L503.0 177.1L505.0 173.8L505.0 170.8L502.1 169.3M337.1 252.5L340.7 250.0L343.3 250.6L345.3 252.5L346.2 250.3L349.3 251.0M332.9 223.6L336.0 223.7L340.0 221.1L342.8 220.6L343.0 224.9L345.2 227.1L348.4 227.6L350.8 228.9L354.3 230.3L355.3 236.2L359.3 236.3L359.5 238.8L361.4 241.0L360.7 242.9L359.8 245.0L359.8 245.7M333.2 239.3L334.4 242.9L335.5 245.0L334.9 246.4L336.2 249.1L337.1 252.5M349.3 251.0L350.1 246.7L351.4 244.5L357.6 243.8L359.8 245.7M703.7 130.8L705.4 132.3L707.5 129.9L711.8 131.1L712.9 133.4L707.5 133.8L705.4 132.3M543.5 257.3L545.4 262.7L549.6 260.7L550.5 258.7L556.7 259.7L559.8 254.6L562.1 253.0L565.5 250.8L561.6 246.6L558.0 243.4L555.8 240.0L551.3 240.5L545.9 241.2M562.7 40.1L569.1 42.4L568.9 45.6L571.2 48.6L573.3 51.0L570.3 51.9L571.2 56.1M552.0 58.4L556.4 56.9L562.3 58.0L568.3 59.1L571.2 56.1L576.6 57.8L577.3 59.3L580.2 62.6L585.8 64.2L590.7 65.3L590.0 68.9L589.8 71.5L586.3 74.0M560.9 186.3L565.8 187.9L569.0 189.9M540.2 189.9L540.2 188.0L542.1 186.2L549.1 188.6L553.8 186.2L556.0 186.3L560.9 186.3L555.5 179.9L552.2 177.8L550.3 172.7M534.6 193.0L540.2 189.9L538.3 195.7L538.1 199.2L534.6 203.2L533.9 207.2L532.2 208.0L530.3 209.4L527.3 208.7L525.2 211.4M513.1 78.1L515.1 77.9L516.4 76.2L517.6 78.2L518.4 76.1L520.2 75.7L521.1 74.9L519.1 74.2L518.9 72.7M490.2 175.9L489.9 181.8L489.2 186.2M332.1 207.8L333.4 200.6L332.4 198.8L331.9 196.7L334.1 196.6L332.4 194.1L336.9 194.0L338.8 195.3L339.3 195.3L342.6 196.2L345.9 194.4L346.1 192.3L347.5 193.0L345.6 188.6L348.7 189.5L349.2 188.7L353.9 186.0M311.3 194.7L313.9 196.1L317.2 197.1L319.5 198.3L321.9 200.4L324.5 203.4L331.8 204.3L332.1 207.8M328.8 170.4L326.1 172.2L324.9 176.4L326.4 178.5L326.4 180.9L331.8 181.8L333.4 183.9L338.0 183.7L337.2 187.6L338.3 190.2L337.1 191.6L338.6 192.7L339.3 195.3M301.7 179.3L301.7 177.1L302.4 175.8M531.3 60.8L532.5 61.0L534.9 61.5L535.7 63.5L538.1 62.8L540.1 64.2L540.8 65.7L538.8 67.6L536.3 68.9M531.3 60.8L530.1 60.2L526.9 62.4L524.9 62.8L525.9 65.0L528.9 68.3L528.1 69.0L526.5 70.6L527.2 72.7L525.2 72.3L521.1 72.5L518.9 72.7L516.6 71.6L514.4 72.3M516.8 45.2L518.7 45.6M530.0 49.2L530.3 51.9L529.8 53.3L530.9 54.4L531.2 56.3L531.8 59.9L531.3 60.8M596.1 169.0L594.7 172.4L597.4 172.5L598.1 171.4M476.1 132.3L485.1 138.2L499.2 148.0L499.3 149.0L504.0 151.2L504.3 153.2L506.5 152.8L510.1 152.1L524.7 142.0L519.8 138.7L518.6 135.1L519.8 133.3L519.5 129.6L518.8 124.5L517.9 119.5L516.0 118.4L514.1 114.8L515.8 112.2L516.0 109.4L516.7 106.0M307.8 205.9L307.6 208.4L310.6 209.7L312.3 205.9L316.3 204.1L318.8 201.7L319.5 198.3M555.2 145.8L583.2 145.8M582.3 164.6L585.6 163.1L588.1 163.9L590.7 164.2L594.5 167.7L596.1 169.0L597.8 168.4M492.3 86.4L493.2 87.3L494.9 87.8L498.1 88.4L499.9 88.8L501.2 89.5L503.9 89.2M597.4 172.5L596.8 173.4L599.9 177.1L607.0 179.5L609.3 179.5L602.2 186.5L598.7 186.9L595.2 188.6L595.0 188.9L592.3 188.2L589.3 190.2L586.0 189.7L583.2 187.7L581.0 187.4L579.5 185.5L576.4 184.1L574.0 179.9L576.6 178.3L576.6 175.9M561.8 20.7L565.4 17.1L569.8 11.2L570.5 9.2L567.0 4.8L568.2 2.4L566.3 -0.8L566.8 -5.3L565.8 -10.4M553.3 -6.4L552.1 -9.2L552.7 -13.3M513.1 78.1L512.5 76.4L510.8 77.1L510.8 75.9L512.6 74.0L513.0 72.7L514.4 72.3L514.4 70.6L515.8 67.5L512.2 66.7L511.5 65.9L510.1 65.5L507.9 64.6L506.3 64.0L506.4 63.0L504.0 61.2L502.5 59.9M514.1 84.9L514.6 83.8L512.7 83.0L512.1 80.7L513.2 79.4L512.5 78.4L513.1 78.1M527.8 193.1L530.5 195.0L530.6 199.2L529.0 203.7L525.9 203.4L523.8 203.5L522.6 207.2M590.5 86.2L596.4 86.9L599.7 88.8L603.9 89.1L605.7 91.0L606.0 93.4L602.2 92.8L598.6 93.4M496.1 172.2L497.7 178.3L497.8 181.8L499.3 183.9M457.0 166.2L461.2 165.8L464.1 166.5L461.2 167.2L457.1 167.6M469.7 169.1L473.0 169.6L474.6 169.2L477.7 174.3L478.4 178.5L476.6 180.5L474.6 180.9L474.2 178.6L472.3 178.3L470.2 174.8L465.2 177.0M523.2 193.0L523.2 195.7L519.5 195.7M543.5 97.7L545.3 96.5L545.9 94.2L548.2 93.3L550.5 92.7M558.4 91.6L559.0 92.7L557.7 94.5M289.2 161.2L286.9 164.3L284.8 165.9M464.3 168.5L464.3 170.8L461.2 172.5M353.9 186.0L355.6 186.3L355.1 187.6L356.2 187.9L356.6 189.0L355.9 189.7L355.5 191.8L356.2 193.8L358.3 195.3L359.5 194.5L361.8 193.5L363.7 193.7L365.1 193.7L365.1 192.3L368.2 192.6L372.2 193.0L373.0 192.1L375.1 188.7M362.2 184.2L361.8 185.8L360.2 188.8L361.8 190.3L363.7 193.7M291.1 167.7L292.8 165.9L295.1 165.7L297.0 163.4L301.0 162.9M286.5 164.3L288.5 165.4L290.2 165.5L290.2 166.7M540.9 78.1L541.3 81.4L536.2 80.2L533.5 80.4L533.5 81.7L534.6 83.7L537.6 86.9L540.0 89.2M528.5 79.6L530.8 78.9L532.5 79.6L533.4 77.1L535.3 76.1M550.3 71.0L546.3 76.4L544.1 77.4L540.9 78.1L537.2 77.9L535.3 76.1L534.3 74.9M536.8 71.0L540.7 71.6L544.7 69.2L548.6 69.6M577.0 121.6L578.5 126.5M580.7 115.9L580.5 117.7L580.0 121.1L578.8 126.3M705.8 145.5L705.1 142.6L703.5 139.5L705.5 137.7L704.2 134.2L707.5 135.6L707.6 137.4L713.6 138.1L713.4 138.7L710.8 140.6L710.8 142.0L712.2 143.2L713.4 141.5L714.1 145.9L713.5 149.0M711.8 131.1L717.4 127.0L722.3 126.6L725.3 129.8L722.5 132.3L720.1 135.6L718.8 137.8L717.6 141.1L715.8 140.6L716.0 143.0L714.1 145.9M686.9 124.6L684.6 128.2L687.3 129.5L692.3 132.1L695.4 132.8L698.1 134.1L703.7 134.3L703.7 130.8L698.6 130.7L696.5 128.9L692.8 127.3L689.4 125.0L686.9 124.6L681.6 121.6L681.6 118.1L681.9 113.4L679.3 110.0L677.2 109.7L672.5 104.9M601.8 105.2L603.2 108.5L605.1 111.1L603.2 114.2L604.8 116.7L608.9 120.3L608.6 122.4L610.6 125.3M605.8 127.5L608.6 124.9L609.3 125.1M588.6 119.3L591.4 119.9L595.4 122.2L601.5 127.3L605.8 127.5L608.0 127.8L610.2 129.0M623.2 104.6L625.3 104.4L628.6 102.6L631.2 102.2L635.9 104.2L638.4 106.7L640.2 106.7L640.3 109.7L638.8 113.6L638.8 115.2L639.6 121.1L641.7 121.4L639.5 125.5L641.4 128.3L644.1 129.8L645.0 132.5L645.3 133.8L642.9 134.6L641.8 135.1L641.3 137.7M587.7 115.9L588.6 119.3L583.5 121.1L585.8 123.8L584.6 125.1L581.2 127.3L578.6 126.9M595.0 188.9L592.9 191.6L592.9 200.0L594.1 201.9M588.6 208.8L585.1 206.2L584.9 205.0L576.3 200.4L576.4 197.6L577.6 195.5L578.8 193.7L576.4 188.3L581.0 187.4M669.7 98.4L677.2 93.7L680.3 93.4L685.0 89.7M663.2 89.9L664.1 91.9L661.5 92.2L665.0 96.2L668.3 94.3L665.7 92.8L662.2 96.8M612.1 76.6L610.5 75.6L607.0 70.6L605.8 69.4L608.2 62.3L610.9 64.2L615.8 57.5L622.0 58.4L627.4 61.9L634.0 59.9L640.8 61.0L641.3 59.3L637.5 56.7L639.9 52.9L640.3 49.0L649.7 47.4L656.8 45.0L663.4 43.8L663.4 48.4L669.2 48.8L677.0 47.2L676.3 49.0L684.6 60.8L692.5 60.2L696.7 65.3L701.7 66.7L698.0 69.6L697.4 74.2L691.5 73.7L689.9 79.2L684.3 81.4L686.4 87.0L685.0 89.7L682.1 88.0L674.6 87.7L670.9 86.9L669.2 89.2L663.8 88.1L663.2 89.9L658.8 92.5L656.3 94.3L653.2 93.3L651.8 87.5L649.0 85.3L640.1 83.2L634.0 79.2L628.1 81.1L628.1 92.8L625.2 90.5L621.3 90.3L619.8 91.4M581.0 112.4L582.5 113.6L580.7 115.9L579.0 116.7M476.6 180.5L479.1 184.5L478.8 187.9M560.0 269.9L563.7 267.3L565.7 269.2L562.8 272.6L560.7 271.8L560.0 269.9M551.7 49.0L556.4 48.0L557.1 45.2L559.0 42.2L562.7 40.1L561.6 35.0L560.8 34.2L561.1 30.9L560.9 27.8L562.5 25.8M546.0 40.5L550.3 39.1L555.2 39.5L559.0 42.2M550.1 47.4L549.8 45.0L546.6 43.8M511.0 63.3L511.8 64.6L511.5 65.9M553.7 32.9L556.0 32.2L558.8 34.4L560.8 34.2M555.6 120.8L554.5 124.9L555.2 127.3L555.2 150.7L552.9 150.7L552.9 152.0L534.1 142.1L531.8 143.3L529.9 144.3L524.7 142.0M491.3 111.1L492.3 113.1L492.5 116.2L493.7 119.5L488.0 120.5L487.9 122.7L484.3 125.1L476.1 128.6L476.1 131.3M477.7 174.3L481.9 173.4L483.6 173.8L484.0 170.5L486.4 168.4L487.2 166.7L489.7 165.3L494.9 162.7L497.1 163.0L504.7 162.1L506.5 158.3L506.5 152.8M725.3 129.8L728.4 131.7L728.4 135.9L725.7 138.8L726.2 141.0L728.9 142.8L730.4 143.4L729.6 145.4L731.9 147.2L734.2 146.9L731.7 149.9L730.3 149.9L726.9 151.2L725.3 154.3L726.3 156.7L728.1 160.3L727.3 162.7L729.5 166.0L729.5 168.5L730.7 170.5L728.6 173.9M702.8 66.7L710.1 74.7L710.4 80.4L720.7 83.5L723.0 88.4L735.7 89.1L743.2 91.9M702.8 66.7L707.1 64.2L713.2 61.0L718.8 63.9L725.2 64.8L727.5 61.9L729.6 56.5L736.7 59.1L738.5 62.8M485.1 138.2L481.0 138.2L483.6 161.7L474.6 161.7L470.9 162.7L468.8 163.1L467.8 163.5L465.0 160.3L462.2 158.9L457.7 160.4M573.9 219.9L574.8 223.2L574.5 227.3L573.3 229.9L574.5 230.8L577.3 231.8L577.8 233.9L577.1 235.9L579.3 238.3L580.6 235.6L580.7 232.5L577.8 229.6L578.6 225.0M287.0 156.1L289.0 154.4M279.8 164.0L280.1 162.7L280.9 160.4L283.9 160.3L281.7 157.5L282.6 157.5L282.6 156.1L287.0 156.1L286.9 160.7L287.6 160.7M570.1 251.3L571.7 256.5L571.6 260.4L569.1 261.3L569.4 263.6L571.9 262.7L573.8 262.7M545.9 241.2L545.9 250.3L543.5 250.3L543.5 257.3L543.5 266.7L541.1 268.2L537.4 267.5L535.2 267.3M505.0 170.8L506.1 166.5L512.5 167.4L519.1 168.2L525.9 167.4L528.5 166.0L528.2 164.1L532.9 158.3L534.1 149.8L531.8 143.3M516.6 187.2L518.4 183.4L523.1 182.6L526.8 177.8L528.9 172.4L530.3 169.1L529.6 167.4L531.8 169.8L531.9 172.9L529.4 174.8L532.9 175.2L532.2 180.6M295.1 172.2L297.5 172.3L299.9 172.7M510.6 61.2L511.1 58.8L510.6 57.1L512.6 56.7L513.1 55.6L512.2 54.1L513.4 51.9M522.6 27.3L524.2 23.9L525.9 22.3L525.2 18.5L526.7 16.8L525.1 15.1L525.4 12.4L524.7 7.1L526.3 3.5L529.3 0.8L530.6 -3.6L530.6 -8.1M627.3 145.8L627.6 140.2L628.9 138.3M618.7 153.2L621.3 158.9M313.4 181.3L314.7 177.9M332.9 223.6L335.1 227.3L334.4 229.9L333.6 232.7L332.8 234.8L334.7 236.5L332.9 238.8L333.2 239.3L331.2 241.3M332.1 207.8L329.8 208.3L325.3 210.0L324.6 213.2L323.3 214.0L322.6 215.5L324.9 219.1L326.4 220.2L326.8 221.3L330.6 220.2L330.6 223.7L332.9 223.6M656.8 141.5L658.2 140.0L663.4 139.7L661.2 135.9L661.7 134.1L659.8 132.5L661.9 130.4L665.5 130.6L668.0 127.3L670.2 125.0L672.0 122.2L671.6 119.7L673.7 118.9M540.8 65.7L543.0 66.7L545.6 66.4L549.5 67.1L549.8 65.3L552.9 62.1L552.0 58.4L552.0 54.2L552.7 52.7L551.7 49.0L550.1 47.4L543.0 47.0M475.8 91.0L477.2 90.5L481.0 90.8L481.9 91.9L480.3 93.7L480.4 95.9L480.1 97.7L478.9 97.8L480.1 99.5L479.3 101.4L480.1 102.2L478.9 104.2L479.1 105.1M349.3 251.0L353.1 254.9L357.9 257.1L361.1 258.9L358.8 263.9L365.1 264.0L368.2 259.5M359.8 245.7L360.6 250.6L364.9 251.1L365.8 252.0L366.3 255.4L368.9 255.5L368.2 259.5M615.9 138.8L616.8 139.2M559.0 70.1L561.4 73.4L562.5 76.4L562.8 79.6M544.1 77.4L546.8 80.4L546.8 81.7L549.3 82.0L549.8 83.7L550.5 84.9L556.2 85.4L560.0 83.8L563.6 85.1M541.3 81.4L542.1 83.3L541.6 85.9L541.0 86.4L540.0 89.2M541.0 86.4L543.7 87.8L543.7 88.9M544.9 91.1L547.3 89.9L549.1 89.7M564.6 204.3L566.8 203.6L569.0 203.4M566.1 201.2L565.1 202.0L564.6 204.3L565.1 205.7L565.5 208.4L566.1 212.5L568.8 217.1L573.9 219.9L576.4 220.2L577.6 222.5L578.6 225.0L582.3 225.4L585.8 224.4L591.6 222.5M568.2 200.5L569.0 203.4L567.9 204.7L568.9 205.7L567.0 208.0L565.5 208.4M597.1 159.5L598.0 157.1L600.4 157.1L606.4 157.4L609.8 155.2L618.7 153.2L625.8 150.7L627.3 145.8L626.2 144.0L620.1 143.4L617.8 140.5M552.2 177.8L555.2 174.1L562.1 175.7L565.8 175.2L568.9 175.4L572.6 170.8L574.5 169.6L574.3 173.1L576.6 175.9L577.1 173.4L578.8 170.3L581.3 168.4L582.3 164.6L583.5 158.0L587.2 155.7M472.3 178.3L469.5 181.9M467.8 163.5L469.7 169.1L464.3 168.5L457.3 169.2M369.6 184.8L368.5 186.5L369.1 189.7L368.2 192.6M596.1 105.4L593.3 107.1L593.6 109.7L587.7 115.9L583.0 118.9L580.5 117.7M571.6 260.4L571.9 262.7M552.9 152.0L552.9 161.2L550.3 162.4L548.7 167.7L550.3 171.5L550.3 172.7L547.5 173.4L541.1 177.1L538.1 179.6L532.2 180.6L530.6 183.9L531.0 187.4L534.3 191.5L534.6 193.0L527.8 193.1L523.2 193.0L519.5 192.7M498.6 172.4L500.3 177.1L500.4 183.5M731.7 183.1L733.9 184.8L736.4 183.5M518.8 124.5L520.7 122.7L520.7 120.5L523.6 116.6M594.1 92.1L597.1 92.2L598.6 93.4L599.2 96.5L601.8 97.7L600.0 98.6L600.8 101.6L600.6 103.0L601.8 105.2L596.1 105.4L592.1 105.4L587.7 106.5L583.7 106.7L582.7 107.8L581.5 109.0M549.5 67.1L548.6 69.6L550.3 71.0L555.0 71.8L559.0 70.1L561.8 69.4L565.0 72.8L567.2 76.4L564.5 76.2L562.8 79.6L566.2 80.4M576.4 188.3L575.2 189.4L571.7 189.8L569.0 189.9L570.1 193.1L566.8 196.7L566.1 201.2L568.2 200.5L576.3 200.4M207.0 67.5L272.9 67.5L273.7 66.4L274.2 68.5L278.2 68.9L281.7 70.8L286.2 71.0L289.0 69.9M317.0 84.0L320.2 81.1L328.5 81.1L330.1 79.7L331.3 77.1L333.9 72.8L336.0 73.2L337.2 74.2L337.2 78.4L338.1 80.1L338.8 80.6M221.3 118.4L227.0 117.8L226.7 118.4L235.6 121.6L242.2 121.6L242.2 120.3L246.2 120.3L249.8 123.4L250.9 126.2L254.0 127.8L255.6 125.8L258.2 125.8L260.8 129.6L262.7 131.7L263.6 134.6L268.1 135.9M361.1 271.5L359.7 277.8L359.3 281.9M361.1 271.5L363.0 271.3L365.1 273.5L368.2 275.0L370.8 277.8L371.5 278.3L371.0 281.2M655.8 105.1L656.8 102.2L654.9 98.9L657.5 98.0L659.4 96.2L662.2 96.8L665.2 98.9L669.7 98.4L672.5 101.6L672.5 104.9M628.1 92.8L630.7 92.8L634.2 88.3L637.5 90.0L637.7 92.5L642.0 93.4L643.1 96.8L647.4 100.1L652.8 104.6M353.9 186.0L352.2 184.2L352.8 182.5L354.8 181.6L355.5 178.2M465.5 131.3L476.1 131.3L476.1 135.6L468.3 135.6L468.3 142.1L465.9 143.3L465.7 147.5L456.6 147.5M568.8 217.1L564.4 217.8L563.2 219.7L563.8 223.0L563.2 226.8L566.5 226.4L566.5 229.5L563.2 227.3L560.4 225.1L556.0 224.2L553.8 224.4L552.9 223.5L552.9 228.4L548.2 228.4L548.2 236.1L551.5 239.5L555.8 240.0L560.0 240.3L564.4 235.5L567.9 234.8L567.5 233.1L574.5 230.8M565.5 250.8L570.1 251.3L572.8 248.6L574.0 244.9L573.3 242.7L574.0 238.9L573.8 237.3L570.1 235.6L567.9 234.8"/>
<defs><pattern id="h1" width="2.2" height="2.2" patternUnits="userSpaceOnUse" patternTransform="rotate(45)"><rect width="2.2" height=".8" fill="#d2d2d2"/></pattern><pattern id="h2" width="2.2" height="2.2" patternUnits="userSpaceOnUse" patternTransform="rotate(-55)"><rect width="2.2" height=".8" fill="#d2d2d2"/></pattern></defs>
<path fill="url(#h1)" d="M669.9 106.0L675.1 106.8L679.3 110.0L681.9 113.4L681.7 117.8L677.5 118.1L673.7 118.9L670.9 117.0L669.7 113.4Z"/><path fill="url(#h2)" d="M711.8 131.1L717.4 127.0L722.3 126.6L724.9 129.6L722.1 132.0L719.8 132.8L715.0 133.3L712.9 133.4Z"/>
<g transform="translate(-19 -121)">
<path d="M107 131.2H193.8V156H139.7L109.8 171.6L124.7 156H107Z" fill="#c9c9c9"/>
<text class="tip" x="143.5" y="147" style="fill:#fff;stroke:#fff;stroke-width:.3px;font-size:11px">Move Map</text>
<circle cx="69.9" cy="146.3" r="11.2" fill="#6dc0ab" stroke="rgba(255,255,255,.22)" stroke-width="1.4"/>
<path transform="translate(69.9 146.3) rotate(0)" d="M0 -7.2L6.4 0.8H3.0V6.6H-3.0V0.8H-6.4Z" fill="#fff"/>
<circle cx="45.3" cy="175.0" r="11.2" fill="#6dc0ab" stroke="rgba(255,255,255,.22)" stroke-width="1.4"/>
<path transform="translate(45.3 175.0) rotate(270)" d="M0 -7.2L6.4 0.8H3.0V6.6H-3.0V0.8H-6.4Z" fill="#fff"/>
<circle cx="94.4" cy="175.0" r="11.2" fill="#6dc0ab" stroke="rgba(255,255,255,.22)" stroke-width="1.4"/>
<path transform="translate(94.4 175.0) rotate(90)" d="M0 -7.2L6.4 0.8H3.0V6.6H-3.0V0.8H-6.4Z" fill="#fff"/>
<circle cx="69.9" cy="202.5" r="11.2" fill="#6dc0ab" stroke="rgba(255,255,255,.22)" stroke-width="1.4"/>
<path transform="translate(69.9 202.5) rotate(180)" d="M0 -7.2L6.4 0.8H3.0V6.6H-3.0V0.8H-6.4Z" fill="#fff"/>
<circle cx="69.9" cy="175.0" r="11.2" fill="#ddd5c3" stroke="rgba(255,255,255,.22)" stroke-width="1.4"/>
<circle cx="69.9" cy="175" r="6.3" fill="none" stroke="#c9485b" stroke-width="2.1"/><path d="M65.5 170.6L74.3 179.4" stroke="#c9485b" stroke-width="2.1"/>
<path d="M116.9 202.8H171.6V233.8H116.9V220.5L75.5 184.6Z" fill="#fff"/>
<text class="tip" x="141" y="222">Reset</text>
<circle cx="44.7" cy="239.6" r="10.8" fill="#6dc0ab" stroke="rgba(255,255,255,.22)" stroke-width="1.4"/>
<circle cx="44.7" cy="269.1" r="10.8" fill="#6dc0ab" stroke="rgba(255,255,255,.22)" stroke-width="1.4"/>
<circle cx="69.7" cy="239.6" r="10.8" fill="#6bb0e2" stroke="rgba(255,255,255,.22)" stroke-width="1.4"/>
<path transform="translate(69.7 239.8) rotate(0)" d="M0 -7.2L7.5 0.8H3.6V6.6H-3.6V0.8H-7.5Z" fill="#fff"/>
<circle cx="69.7" cy="269.1" r="10.8" fill="#6bb0e2" stroke="rgba(255,255,255,.22)" stroke-width="1.4"/>
<path transform="translate(69.7 269.3) rotate(180)" d="M0 -7.2L7.5 0.8H3.6V6.6H-3.6V0.8H-7.5Z" fill="#fff"/>
<path d="M46.8 241.9L50.8 245.4" stroke="#46535f" stroke-width="2" stroke-linecap="round"/>
<circle cx="43.2" cy="238.4" r="4.6" fill="#7fc9b3" stroke="#46535f" stroke-width="1.2"/>
<path d="M40.5 238.4H45.9M43.2 235.7V241.1" stroke="#fff" stroke-width="1.5"/>
<path d="M46.8 271.4L50.8 274.9" stroke="#46535f" stroke-width="2" stroke-linecap="round"/>
<circle cx="43.2" cy="267.9" r="4.6" fill="#7fc9b3" stroke="#46535f" stroke-width="1.2"/>
<path d="M40.5 267.9H45.9" stroke="#fff" stroke-width="1.5"/>
<path d="M141.8 272.6L287.8 270.8V310.8H141.8V298L83.8 272L141.8 287.5Z" fill="#fff"/>
<text class="tip" x="213.4" y="290.1">Adjust height</text>
<text class="tip" x="214" y="301.9">(non-responsive only)</text>
<path d="M27.1 343.7H60.3L46.2 281.1L73.4 343.7H118.9V381.6H27.1Z" fill="#fff"/>
<text class="tip" x="73.2" y="360" style="font-size:10.8px">Zoom In /</text>
<text class="tip" x="73.2" y="372.8" style="font-size:10.8px">Zoom Out</text>
<circle cx="341.7" cy="216.5" r="6.7" fill="#27b33a" stroke="#8bd27e" stroke-width=".8"/>
</g>
</svg>
  </div>
  <div class="hr" style="top:470px"></div>
  <div class="lbl" style="left:8px;top:488px">Map Region :</div>
  <div class="sel">World<b></b></div>
</div>
</body>
</html>
